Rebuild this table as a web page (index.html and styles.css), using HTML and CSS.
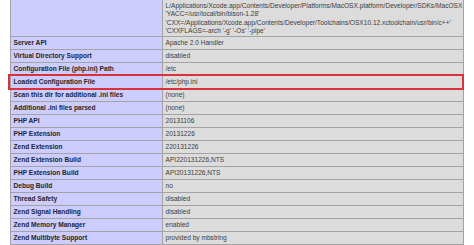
FILE: index.html
```html
<!DOCTYPE html>
<html>
<head>
<meta charset="utf-8">
<link rel="stylesheet" href="styles.css">
</head>
<body>
<table class="info">
<colgroup><col class="c-e"><col class="c-v"></colgroup>
<tbody>
<tr class="first"><td class="e"></td><td class="v multi">
<div class="ln">L/Applications/Xcode.app/Contents/Developer/Platforms/MacOSX.platform/Developer/SDKs/MacOSX</div>
<div class="ln">'YACC=/usr/local/bin/bison-1.28'</div>
<div class="ln">'CXX=/Applications/Xcode.app/Contents/Developer/Toolchains/OSX10.12.xctoolchain/usr/bin/c++'</div>
<div class="ln">'CXXFLAGS=-arch '-g' '-Os' '-pipe'</div>
</td></tr>
<tr><td class="e">Server API</td><td class="v">Apache 2.0 Handler</td></tr>
<tr><td class="e">Virtual Directory Support</td><td class="v">disabled</td></tr>
<tr><td class="e">Configuration File (php.ini) Path</td><td class="v">/etc</td></tr>
<tr><td class="e hl">Loaded Configuration File</td><td class="v">/etc/php.ini</td></tr>
<tr><td class="e">Scan this dir for additional .ini files</td><td class="v">(none)</td></tr>
<tr><td class="e">Additional .ini files parsed</td><td class="v">(none)</td></tr>
<tr><td class="e">PHP API</td><td class="v">20131106</td></tr>
<tr><td class="e">PHP Extension</td><td class="v">20131226</td></tr>
<tr><td class="e">Zend Extension</td><td class="v">220131226</td></tr>
<tr><td class="e">Zend Extension Build</td><td class="v">API220131226,NTS</td></tr>
<tr><td class="e">PHP Extension Build</td><td class="v">API20131226,NTS</td></tr>
<tr><td class="e">Debug Build</td><td class="v">no</td></tr>
<tr><td class="e">Thread Safety</td><td class="v">disabled</td></tr>
<tr><td class="e">Zend Signal Handling</td><td class="v">disabled</td></tr>
<tr><td class="e">Zend Memory Manager</td><td class="v">enabled</td></tr>
<tr><td class="e">Zend Multibyte Support</td><td class="v">provided by mbstring</td></tr>
</tbody>
</table>
</body>
</html>
```
FILE: styles.css
```css
html, body {
  margin: 0;
  padding: 0;
  background: #fff;
  overflow: hidden;
}
body {
  font-family: "Liberation Sans", Arial, sans-serif;
}
.info {
  margin-left: 10px;
  width: 453px;
  border-collapse: collapse;
  table-layout: fixed;
}
.c-e { width: 152px; }
.c-v { width: 301px; }
.info td {
  border: 1px solid #a3a3a3;
  padding: 0 0 0 2.5px;
  line-height: 12px;
  white-space: nowrap;
  overflow: hidden;
  vertical-align: middle;
}
.info tr.first td {
  border-top: 0;
  padding-top: 2px;
  padding-bottom: 0;
  height: 34px;
  vertical-align: top;
}
.e {
  background: #ccccfe;
  font-weight: bold;
  font-size: 6.6px;
  color: #262626;
}
.v {
  background: #dcdcdc;
  font-size: 6.6px;
  color: #3c3c3c;
}
.multi .ln {
  line-height: 8.3px;
  white-space: nowrap;
}
.info td.hl {
  position: relative;
  overflow: visible;
}
.hl::after {
  content: "";
  position: absolute;
  left: -3px;
  top: -2px;
  bottom: -2px;
  width: 452px;
  border: 2px solid #d8333b;
  pointer-events: none;
}
```
